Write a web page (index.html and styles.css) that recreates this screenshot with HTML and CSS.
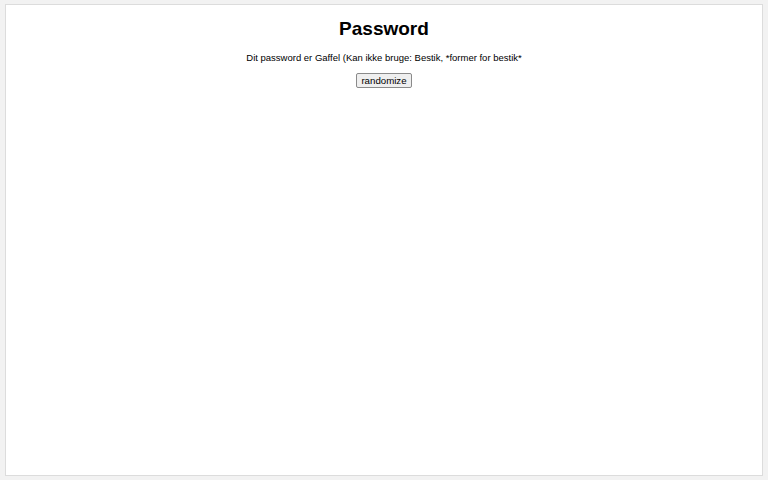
FILE: index.html
```html
<!DOCTYPE html>
<html>
<head>
<meta charset="utf-8">
<link rel="stylesheet" href="styles.css">
</head>
<body>
<div class="frame">
  <h1 class="title">Password</h1>
  <p class="info">Dit password er Gaffel (Kan ikke bruge: Bestik, *former for bestik*</p>
  <button class="btn">randomize</button>
</div>
</body>
</html>
```
FILE: styles.css
```css
html, body {
  margin: 0;
  padding: 0;
  background: #f2f2f2;
  height: 100%;
}
body {
  padding: 4px 5px;
  box-sizing: border-box;
  font-family: "Liberation Sans", Arial, sans-serif;
}
.frame {
  background: #fff;
  border: 1px solid #dcdcdc;
  height: 100%;
  box-sizing: border-box;
  display: flex;
  flex-direction: column;
  align-items: center;
}
.title {
  margin: 14px 0 0;
  font-size: 19px;
  font-weight: bold;
  line-height: 20px;
  color: #000;
}
.info {
  margin: 13px 0 0;
  font-size: 9.5px;
  line-height: 12px;
  color: #000;
}
.btn {
  margin-top: 9px;
  font-family: "Liberation Sans", Arial, sans-serif;
  font-size: 9.7px;
  line-height: 11px;
  padding: 1px 4px;
  background: #efefef;
  border: 1px solid #8a8a8a;
  border-radius: 2px;
  color: #000;
}
```
